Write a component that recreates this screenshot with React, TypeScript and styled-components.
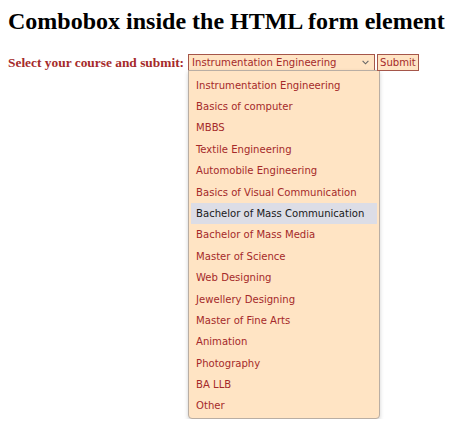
import React, { useState } from "react";
import styled, { createGlobalStyle } from "styled-components";

const courses = [
  "Instrumentation Engineering",
  "Basics of computer",
  "MBBS",
  "Textile Engineering",
  "Automobile Engineering",
  "Basics of Visual Communication",
  "Bachelor of Mass Communication",
  "Bachelor of Mass Media",
  "Master of Science",
  "Web Designing",
  "Jewellery Designing",
  "Master of Fine Arts",
  "Animation",
  "Photography",
  "BA LLB",
  "Other",
];

const GlobalStyle = createGlobalStyle`
  body {
    margin: 8px;
    background: #fff;
    font-family: "Liberation Serif", "Times New Roman", serif;
  }
`;

const Title = styled.h1`
  margin: 0;
  font-size: 24px;
  font-weight: bold;
  color: #000;
  line-height: 26.6px;
`;

const Form = styled.form`
  margin-top: 19px;
  display: flex;
  align-items: flex-start;
  gap: 2px;
`;

const Label = styled.label`
  font-size: 13.4px;
  line-height: 17px;
  font-weight: bold;
  color: #a52a2a;
  margin-right: 2px;
`;

const Combo = styled.div`
  display: flex;
  flex-direction: column;
  width: 187px;
`;

const SelectBox = styled.button`
  display: flex;
  align-items: center;
  justify-content: space-between;
  width: 187px;
  height: 17px;
  padding: 0 5px 0 3px;
  box-sizing: border-box;
  background: #ffe4c4;
  border: 1px solid #a5564a;
  color: #a52a2a;
  font-family: "DejaVu Sans Condensed", Tahoma, sans-serif;
  font-size: 11.2px;
  cursor: default;
`;

const Chevron = styled.svg`
  width: 7px;
  height: 5px;
`;

const List = styled.ul`
  width: 192px;
  box-sizing: border-box;
  margin: -1px 0 0;
  padding: 4px 2px 1px;
  list-style: none;
  background: #ffe4c4;
  border: 1px solid #b9aea4;
  border-radius: 0 0 4px 4px;
  box-shadow: 0 2px 4px rgba(0, 0, 0, 0.18);
`;

const Item = styled.li<{ $active: boolean }>`
  height: 21.4px;
  line-height: 21.4px;
  padding-left: 5px;
  font-family: "DejaVu Sans Condensed", Tahoma, sans-serif;
  font-size: 11.2px;
  white-space: nowrap;
  color: ${(p) => (p.$active ? "#1a1a1a" : "#a52a2a")};
  background: ${(p) => (p.$active ? "#dcdde6" : "transparent")};
`;

const SubmitButton = styled.button`
  height: 17px;
  padding: 0 2px;
  background: #ffe4c4;
  border: 1px solid #a5564a;
  color: #a52a2a;
  font-family: "DejaVu Sans Condensed", Tahoma, sans-serif;
  font-size: 11.2px;
  line-height: 13px;
`;

export default function App() {
  const [value, setValue] = useState(courses[0]);
  const [hover, setHover] = useState(6);

  return (
    <>
      <GlobalStyle />
      <Title>Combobox inside the HTML form element</Title>
      <Form onSubmit={(e) => e.preventDefault()}>
        <Label>Select your course and submit:</Label>
        <Combo>
          <SelectBox type="button">
            <span>{value}</span>
            <Chevron viewBox="0 0 7 5">
              <path d="M0.6 0.8 L3.5 3.8 L6.4 0.8" fill="none" stroke="#666" strokeWidth="1.1" />
            </Chevron>
          </SelectBox>
          <List>
            {courses.map((c, i) => (
              <Item
                key={c}
                $active={i === hover}
                onMouseEnter={() => setHover(i)}
                onClick={() => setValue(c)}
              >
                {c}
              </Item>
            ))}
          </List>
        </Combo>
        <SubmitButton type="submit">Submit</SubmitButton>
      </Form>
    </>
  );
}
